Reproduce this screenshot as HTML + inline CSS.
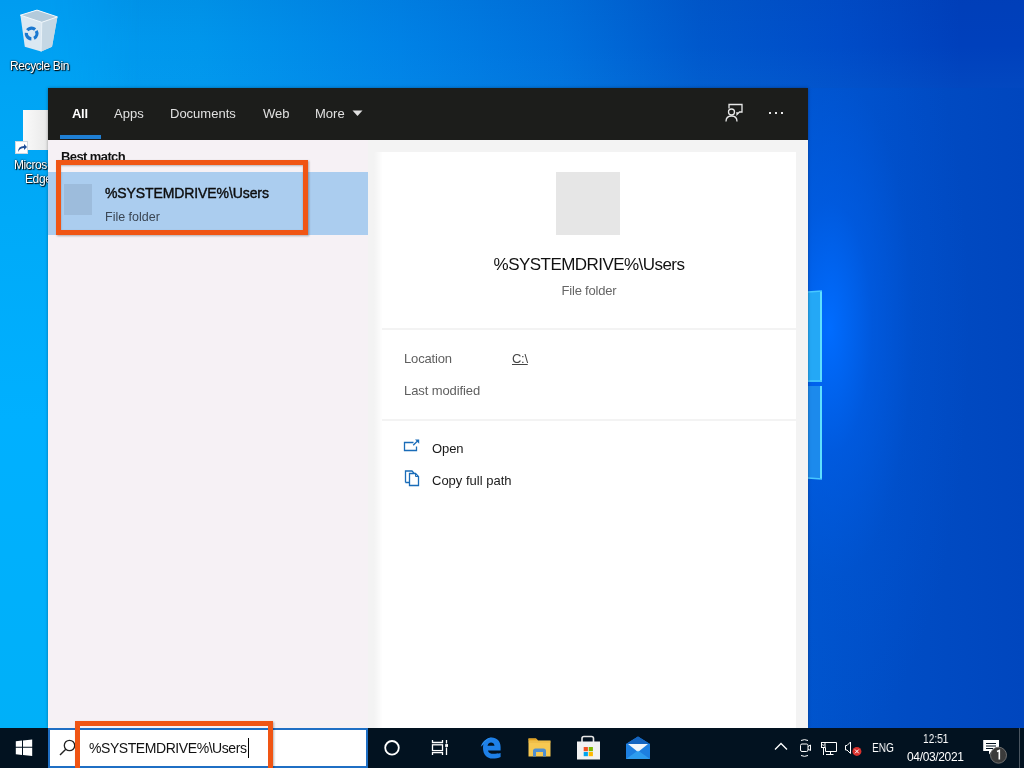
<!DOCTYPE html>
<html><head><meta charset="utf-8">
<style>
*{margin:0;padding:0;box-sizing:border-box}
html,body{width:1024px;height:768px;overflow:hidden}
body{position:relative;font-family:"Liberation Sans",sans-serif;
background:linear-gradient(180deg,rgba(0,40,120,.05) 0px,rgba(0,40,120,0) 45px,rgba(40,190,255,.06) 88px),linear-gradient(90deg,#009cf0 0px,#0096ec 200px,#0082e6 400px,#0070dc 560px,#0058cc 700px,#004cc8 840px,#0040bc 960px,#0040bc 1024px);}
.a{position:absolute}
.t{position:absolute;white-space:pre;font-family:"Liberation Sans",sans-serif;will-change:transform}
#lstrip{left:0;top:0;width:140px;height:728px;-webkit-mask-image:linear-gradient(90deg,#000 48px,transparent 140px);mask-image:linear-gradient(90deg,#000 48px,transparent 140px);
background:linear-gradient(180deg,#009cf0 0px,#00a4f4 88px,#00aaf8 220px,#00b0ff 420px,#00b0f8 728px);}
#rbg{left:808px;top:88px;width:216px;height:640px;background:radial-gradient(ellipse 140px 420px at 22px 240px,rgba(0,108,255,1) 0%,rgba(0,96,238,.55) 30%,rgba(0,90,225,.2) 60%,rgba(0,80,210,0) 100%),linear-gradient(90deg,#0054cc 0px,#004cc4 100px,#0046be 216px);}
.dl{color:#fff;font-size:12px;line-height:12px;text-shadow:0 0 2px #000,1px 1px 1px #000;letter-spacing:-0.4px}
#panel{left:48px;top:88px;width:760px;height:640px;background:#f6f1f5;overflow:hidden;box-shadow:0 0 3px rgba(0,0,0,.35)}
#hdr{left:0;top:0;width:760px;height:52px;background:#1c1d1b;}
.tab{position:absolute;will-change:transform;top:19px;font-size:13px;line-height:13px;color:#e0e0e0;white-space:pre}
#rpane{left:320px;top:52px;width:440px;height:588px;background:#f3f3f3}
.card{position:absolute;left:14px;width:414px;background:#fff}
#taskbar{left:0;top:728px;width:1024px;height:40px;background:#021220;}
.dark{color:#1a1a1a}
.gray{color:#606060}
</style></head><body>
<div id="lstrip" class="a"></div>
<div id="rbg" class="a"></div>


<!-- windows logo panes -->
<svg class="a" style="left:800px;top:280px" width="40" height="210">
  <path d="M8 12 L22 11 L22 102 L8 102 Z" fill="#24a8f6"/>
  <path d="M8 106 L22 106 L22 199 L8 198 Z" fill="#1c8aec"/>
  <path d="M21 11 L21 102 M21 106 L21 199" stroke="#5ee0ff" stroke-width="2"/>
  <path d="M8 12 L22 11 M8 101 L22 101 M8 198 L22 199" stroke="#48c8ff" stroke-width="1.5"/>
</svg>
<!-- recycle bin -->
<svg class="a" style="left:0;top:0" width="80" height="60">
  <path d="M20.4 15.2 L37 10.1 L57.4 16.9 L52 46.7 L41.1 51.4 L24.8 46.7 Z" fill="#dbe8f2"/>
  <path d="M41.8 22.3 L57.4 16.9 L52 46.7 L41.1 51.4 Z" fill="#c5d7e4"/>
  <path d="M20.4 15.2 L37 10.1 L57.4 16.9 L41.8 22.3 Z" fill="#b3cadb" stroke="#f2f8fc" stroke-width="1"/>
  <path d="M41.8 22.3 L41.1 51.4" stroke="#eef5fa" stroke-width="0.8"/>
  <circle cx="31.6" cy="33.5" r="5.3" fill="none" stroke="#1a78d0" stroke-width="3.2" stroke-dasharray="8.5 2.6" transform="rotate(-30 31.6 33.5)"/>
</svg>
<div class="t dl" style="left:10px;top:60px">Recycle Bin</div>

<!-- edge desktop icon -->
<div class="a" style="left:23px;top:110px;width:26px;height:40px;background:linear-gradient(90deg,#fafafa,#e8e8e8)"></div>
<div class="a" style="left:15px;top:141px;width:13px;height:13px;background:#fff;border:1px solid #cfd8e0"></div>
<svg class="a" style="left:15px;top:141px" width="13" height="13"><path d="M3 11 Q3 5 9 5 L9 3 L12 6 L9 9 L9 7 Q5 7 3 11 Z" fill="#1f4f9a"/></svg>
<div class="t dl" style="left:13.7px;top:159px">Micros</div>
<div class="t dl" style="left:25.4px;top:173px">Edge</div>

<div id="panel" class="a">
  <div id="hdr" class="a">
    <div class="tab" style="left:24px;color:#fff;font-weight:bold;letter-spacing:-0.3px">All</div>
    <div class="a" style="left:12px;top:47px;width:41px;height:4px;background:#1f7fd4"></div>
    <div class="tab" style="left:66px">Apps</div>
    <div class="tab" style="left:122px">Documents</div>
    <div class="tab" style="left:215px">Web</div>
    <div class="tab" style="left:267px">More</div>
    <svg class="a" style="left:304px;top:22px" width="12" height="7"><path d="M0.5 0.5 L10.5 0.5 L5.5 6 Z" fill="#e0e0e0"/></svg>
    <!-- feedback icon -->
    <svg class="a" style="left:676px;top:14px" width="22" height="22">
      <path d="M5 6.5 L5 2.5 L18 2.5 L18 10 L15.5 10 L13 12.5 L13 10" fill="none" stroke="#e8e8e8" stroke-width="1.3"/>
      <circle cx="7.5" cy="10" r="3" fill="#1c1d1b" stroke="#e8e8e8" stroke-width="1.3"/>
      <path d="M2 19.5 Q2 14 7.5 14 Q13 14 13 19.5" fill="none" stroke="#e8e8e8" stroke-width="1.3"/>
    </svg>
    <div class="a" style="left:721px;top:24px;width:2px;height:2px;background:#e8e8e8"></div>
    <div class="a" style="left:727px;top:24px;width:2px;height:2px;background:#e8e8e8"></div>
    <div class="a" style="left:733px;top:24px;width:2px;height:2px;background:#e8e8e8"></div>
  </div>

  <div class="t" style="left:12.5px;top:62px;font-size:13px;line-height:13px;font-weight:bold;color:#111;letter-spacing:-0.6px">Best match</div>
  <div class="a" style="left:0;top:84px;width:320px;height:63px;background:#abcdef"></div>
  <div class="a" style="left:16px;top:96px;width:28px;height:31px;background:#9dbcdc"></div>
  <div class="t" style="left:56.5px;top:97.5px;font-size:14px;line-height:14px;color:#0d0d0d;letter-spacing:-0.1px;-webkit-text-stroke:0.4px #0d0d0d">%SYSTEMDRIVE%\Users</div>
  <div class="t" style="left:56.5px;top:123px;font-size:12.5px;line-height:13px;color:#3a4654">File folder</div>

  <div id="rpane" class="a">
    <div class="card" style="top:12px;height:176px">
      <div class="a" style="left:174px;top:20px;width:64px;height:63px;background:#e6e6e6"></div>
      <div class="t" style="left:0;width:414px;text-align:center;top:104.2px;font-size:17px;line-height:17px;color:#111;letter-spacing:-0.55px">%SYSTEMDRIVE%\Users</div>
      <div class="t" style="left:0;width:414px;text-align:center;top:131.9px;font-size:13px;line-height:13px;color:#666;letter-spacing:-0.2px">File folder</div>
    </div>
    <div class="card" style="top:190px;height:89px"></div>
    <div class="card" style="top:281px;height:320px"></div>
  </div>
</div>

<div class="a" style="left:374px;top:152px;width:8px;height:576px;background:linear-gradient(90deg,rgba(255,255,255,0),rgba(255,255,255,.9))"></div>
<!-- right pane texts in absolute page coords -->
<div class="t" style="left:404px;top:351.9px;font-size:13px;line-height:13px;color:#5f5f5f;letter-spacing:-0.15px">Location</div>
<div class="t" style="left:512px;top:351.9px;font-size:13px;line-height:13px;color:#444;text-decoration:underline;letter-spacing:-0.3px">C:\</div>
<div class="t" style="left:404px;top:383.6px;font-size:13px;line-height:13px;color:#5f5f5f;letter-spacing:-0.1px">Last modified</div>
<svg class="a" style="left:402px;top:438px" width="20" height="52">
  <path d="M11.5 4.5 L2.5 4.5 L2.5 12.5 L14.5 12.5 L14.5 8.5" fill="none" stroke="#1a6cb8" stroke-width="1.3"/>
  <path d="M11.2 7.3 L15.8 2.7" fill="none" stroke="#1a6cb8" stroke-width="1.3"/>
  <path d="M13 1.5 L17.2 1.5 L17.2 5.7 Z" fill="#1a6cb8"/>
  <path d="M3.5 44.5 L3.5 33 L10 33 L12 35.2 M3.5 44.5 L7.5 44.5" fill="none" stroke="#1a6cb8" stroke-width="1.3"/>
  <path d="M7.5 35.5 L13.5 35.5 L16.5 38.5 L16.5 47.5 L7.5 47.5 Z" fill="none" stroke="#1a6cb8" stroke-width="1.3"/>
  <path d="M13.5 35.5 L13.5 38.5 L16.5 38.5" fill="none" stroke="#1a6cb8" stroke-width="1"/>
</svg>
<div class="t dark" style="left:432px;top:441.9px;font-size:13px;line-height:13px;letter-spacing:-0.1px">Open</div>
<div class="t dark" style="left:432px;top:473.8px;font-size:13px;line-height:13px">Copy full path</div>

<!-- orange box best match -->
<div class="a" style="left:56px;top:160px;width:252px;height:75px;border:5.5px solid #f05514;box-shadow:1px 1px 2px rgba(0,0,0,.3),inset 0 1px 2px rgba(0,0,0,.25)"></div>

<div id="taskbar" class="a">
  <!-- start -->
  <svg class="a" style="left:14px;top:10px" width="22" height="20">
    <path d="M1.8 3.3 L8 2.6 L8 8.8 L1.8 8.8 Z M9 2.5 L18.2 1.6 L18.2 8.8 L9 8.8 Z M1.8 9.8 L8 9.8 L8 17 L1.8 16.2 Z M9 9.8 L18.2 9.8 L18.2 18.1 L9 17.1 Z" fill="#fff"/>
  </svg>
  <!-- search box -->
  <div class="a" style="left:48px;top:0;width:320px;height:40px;background:#fff;border:2px solid #1f6fc4;"></div>
  <svg class="a" style="left:56px;top:8px" width="24" height="24">
    <circle cx="13.5" cy="9.5" r="5.2" fill="none" stroke="#222" stroke-width="1.3"/>
    <path d="M9.8 13.2 L4 19" stroke="#222" stroke-width="1.4"/>
  </svg>
  <div class="t" style="left:88.9px;top:13.25px;font-size:14px;line-height:14px;color:#111;letter-spacing:-0.43px">%SYSTEMDRIVE%\Users</div>
  <div class="a" style="left:248px;top:10px;width:1px;height:20px;background:#000"></div>
  <!-- cortana -->
  <svg class="a" style="left:382px;top:10px" width="20" height="20"><circle cx="10" cy="9.8" r="6.8" fill="none" stroke="#fff" stroke-width="1.8"/></svg>
  <!-- task view -->
  <svg class="a" style="left:430px;top:10px" width="20" height="20">
    <path d="M2.5 2 L2.5 4.5 L12.5 4.5 L12.5 2" fill="none" stroke="#fff" stroke-width="1.3"/>
    <rect x="2.5" y="6.8" width="10" height="5.8" fill="none" stroke="#fff" stroke-width="1.3"/>
    <path d="M2.5 17 L2.5 14.6 L12.5 14.6 L12.5 17" fill="none" stroke="#fff" stroke-width="1.3"/>
    <path d="M16.5 2 L16.5 5.5 M16.5 9.5 L16.5 17" stroke="#fff" stroke-width="1.3"/>
    <rect x="15.2" y="6.1" width="2.8" height="2.8" fill="#fff"/>
  </svg>
  <!-- edge -->
  <svg class="a" style="left:476px;top:4px" width="30" height="30">
    <path d="M24.6 18.4 L24.6 15 C24.6 9 20.5 5.5 15.8 5.5 C10.5 5.5 7 10.5 7 16 C7 22.5 11 26.6 16.5 26.6 C19.5 26.6 22.5 26 24.6 25 L24.6 21 C22.5 21.6 19.5 21.8 17.5 21.8 C14.5 21.8 12.2 20.5 12 18.4 Z M11.5 13.7 C12 11.5 13.5 10.5 15 10.5 C16.8 10.5 18.2 11.5 18.5 13.7 Z" fill="#1e80e8" fill-rule="evenodd"/>
    <path d="M4.8 14.8 C6.5 9.5 10.5 6 16 5.6 C12 6.8 9 9.5 7.5 12.5 Z" fill="#2a8ef0"/>
  </svg>
  <!-- explorer -->
  <svg class="a" style="left:526px;top:8px" width="28" height="24">
    <path d="M2.5 2.5 L10 2.5 L12 4.5 L24.5 4.5 L24.5 20.5 L2.5 20.5 Z" fill="#f6c852"/>
    <path d="M2.5 2.5 L10 2.5 L12 4.5 L2.5 4.5 Z" fill="#e0a020"/>
    <path d="M2.5 6 L24.5 6" stroke="#e8b440" stroke-width="1"/>
    <path d="M7 20.5 L7 15 Q7 12.5 9.5 12.5 L17.5 12.5 Q20 12.5 20 15 L20 20.5 L17 20.5 L17 16 L10 16 L10 20.5 Z" fill="#4f8fd0"/>
  </svg>
  <!-- store -->
  <svg class="a" style="left:574px;top:6px" width="28" height="28">
    <path d="M8 8 L8 4.5 Q8 2.5 10 2.5 L17.5 2.5 Q19.5 2.5 19.5 4.5 L19.5 8" fill="none" stroke="#e8e8e8" stroke-width="1.6"/>
    <rect x="3" y="7.5" width="23" height="18" fill="#f2f2f2"/>
    <rect x="9.7" y="13" width="4.2" height="4.2" fill="#f25022"/>
    <rect x="14.7" y="13" width="4.2" height="4.2" fill="#7fba00"/>
    <rect x="9.7" y="18" width="4.2" height="4.2" fill="#00a4ef"/>
    <rect x="14.7" y="18" width="4.2" height="4.2" fill="#ffb900"/>
  </svg>
  <!-- mail -->
  <svg class="a" style="left:624px;top:6px" width="28" height="28">
    <path d="M2 10 L14 2.5 L26 10 L26 25 L2 25 Z" fill="#1d7fe0"/>
    <path d="M2 10 L14 2.5 L26 10 Z" fill="#1565c0"/>
    <path d="M4 10 L24 10 L14 18 Z" fill="#f2f6fa"/>
    <path d="M2 25 L14 16.5 L26 25 Z" fill="#34a8f4" opacity=".7"/>
  </svg>
  <!-- tray -->
  <svg class="a" style="left:772px;top:12px" width="18" height="12"><path d="M3 9.5 L9 3.5 L15 9.5" fill="none" stroke="#fff" stroke-width="1.3"/></svg>
  <svg class="a" style="left:798px;top:10px" width="16" height="20">
    <path d="M3 2.5 Q6.5 0.8 10 2.5 M3 17.5 Q6.5 19.2 10 17.5" fill="none" stroke="#fff" stroke-width="1"/>
    <rect x="2.5" y="6" width="7.5" height="7.5" rx="1.5" fill="none" stroke="#fff" stroke-width="1"/>
    <path d="M10 8.5 L12.5 7 L12.5 12.5 L10 11" fill="none" stroke="#fff" stroke-width="1"/>
  </svg>
  <svg class="a" style="left:819px;top:12px" width="22" height="18">
    <rect x="2.5" y="2.5" width="3.5" height="5" fill="none" stroke="#fff" stroke-width="1"/>
    <path d="M3.3 4.3 L4.25 5.6 L5.2 4.3" fill="none" stroke="#fff" stroke-width="0.9"/>
    <path d="M4.5 7.5 L4.5 15 M11.5 11.5 L11.5 14.5 M7 14.5 L14.5 14.5" stroke="#fff" stroke-width="1"/>
    <path d="M6 2.5 L17.5 2.5 L17.5 11.5 L6.5 11.5 L6.5 7.5" fill="none" stroke="#fff" stroke-width="1"/>
  </svg>
  <svg class="a" style="left:842px;top:12px" width="22" height="20">
    <path d="M3.5 5.5 L5 5.5 L8.5 2 L8.5 13.5 L5 10 L3.5 10 Z" fill="none" stroke="#fff" stroke-width="1"/>
    <circle cx="14.9" cy="11.4" r="4.5" fill="#d9302c"/>
    <path d="M13 9.5 L16.8 13.3 M16.8 9.5 L13 13.3" stroke="#fff" stroke-width="1"/>
  </svg>
  <div class="t" style="left:871.8px;top:13.5px;font-size:12px;line-height:12px;color:#fff;transform:scaleX(0.835);transform-origin:0 0">ENG</div>
  <div class="t" style="left:922.5px;top:5.2px;font-size:12px;line-height:12px;color:#fff;transform:scaleX(0.846);transform-origin:0 0">12:51</div>
  <div class="t" style="left:907px;top:22.7px;font-size:12px;line-height:12px;color:#fff;letter-spacing:-0.35px">04/03/2021</div>
  <!-- notification -->
  <svg class="a" style="left:980px;top:10px" width="30" height="30">
    <path d="M3.2 2 L19 2 L19 13 L12 13 L9 16.5 L9 13 L3.2 13 Z" fill="#fff"/>
    <path d="M6 5.5 L16 5.5 M6 8 L16 8 M6 10.5 L13 10.5" stroke="#021220" stroke-width="1"/>
    <circle cx="18.5" cy="17.2" r="8" fill="#3b3b3b" stroke="#707070" stroke-width="1"/>
    <path d="M17 13.5 L19.3 12.5 L19.3 21.5" fill="none" stroke="#fff" stroke-width="1.6"/>
  </svg>
  <div class="a" style="left:1019px;top:0;width:1px;height:40px;background:#4a5560"></div>
</div>

<!-- orange box search -->
<div class="a" style="left:75px;top:721px;width:198px;height:52px;border:5.5px solid #f05514;box-shadow:1px 1px 2px rgba(0,0,0,.3)"></div>
</body></html>
